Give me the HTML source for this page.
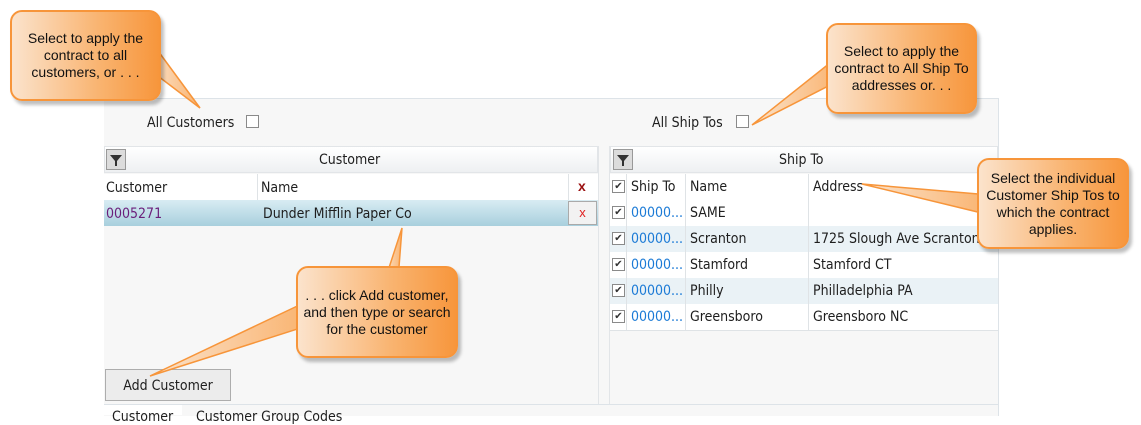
<!DOCTYPE html>
<html><head><style>
body{margin:0;width:1141px;height:415px;overflow:hidden;background:#fff;font-family:"Liberation Sans",sans-serif;position:relative}
.a{position:absolute}
.ui{font-size:14px;color:#1e1e1e;font-family:"DejaVu Sans Condensed","Liberation Sans",sans-serif}
.cb{position:absolute;width:11px;height:11px;border:1px solid #8a8a8a;background:#fff}
.chk{position:absolute;width:11px;height:11px;border:1px solid #8a8a8a;background:#fff;font-size:10px;line-height:11px;text-align:center;color:#333}
.call{position:absolute;border:2px solid #f7953a;border-radius:12px;background:linear-gradient(90deg,#fbe3cc,#f9b36f 60%,#f7963c);box-shadow:3px 4px 3px rgba(0,0,0,.25);font-size:14px;color:#111;text-align:center;display:flex;align-items:center;justify-content:center;line-height:17px;box-sizing:border-box}
.row{position:absolute;left:610px;width:388px;height:26px;border-bottom:1px solid #dfe3e6}
.c{position:absolute;top:0;height:26px;line-height:26px;border-right:1px solid #dfe3e6;box-sizing:border-box;padding-left:4px;white-space:nowrap;overflow:hidden}
</style></head><body>
<div class="a" style="left:104px;top:98px;width:894px;height:317px;background:#f7f7f7;border-top:1px solid #dde3e8;border-right:1px solid #dde3e8"></div>
<div class="a ui" style="left:147px;top:115px">All Customers</div><div class="cb" style="left:246px;top:115px"></div>
<div class="a ui" style="left:652px;top:115px">All Ship Tos</div><div class="cb" style="left:736px;top:115px"></div>
<!-- left grid -->
<div class="a" style="left:104px;top:146px;width:494px;height:27px;background:linear-gradient(#fff,#eef0f2);border:1px solid #e2e5e8;box-sizing:border-box"></div>
<div class="a" style="left:106px;top:149px;width:20px;height:21px;background:#dcdcdc;border:1px solid #999;box-sizing:border-box"><svg width="18" height="19"><path d="M3 5h12l-5 6v5h-2v-5z" fill="#333"/></svg></div>
<div class="a ui" style="left:319px;top:152px">Customer</div>
<div class="a" style="left:104px;top:174px;width:494px;height:26px;background:#fff;border-bottom:1px solid #dfe3e6"></div>
<div class="a" style="left:257px;top:174px;width:1px;height:52px;background:#dfe3e6"></div>
<div class="a" style="left:568px;top:174px;width:1px;height:26px;background:#dfe3e6"></div>
<div class="a ui" style="left:106px;top:180px">Customer</div>
<div class="a ui" style="left:261px;top:180px">Name</div>
<div class="a" style="left:578px;top:178px;color:#9a1010;font-weight:bold;font-size:14px">x</div>
<div class="a" style="left:104px;top:200px;width:494px;height:26px;background:linear-gradient(#d8ecf3,#a8cfdd)"></div>
<div class="a ui" style="left:106px;top:206px;color:#6a1e7a">0005271</div>
<div class="a ui" style="left:263px;top:206px">Dunder Mifflin Paper Co</div>
<div class="a" style="left:568px;top:201px;width:29px;height:24px;background:#f2f2f2;border:1px solid #aaa;box-sizing:border-box;color:#e02020;text-align:center;font-size:13px;line-height:22px">x</div>
<div class="a" style="left:105px;top:369px;width:126px;height:32px;background:#ececec;border:1px solid #adadad;box-sizing:border-box;text-align:center;line-height:32px" ><span class="ui">Add Customer</span></div>
<div class="a" style="left:598px;top:146px;width:1px;height:258px;background:#e2e5e8"></div>
<div class="a" style="left:609px;top:146px;width:1px;height:258px;background:#e2e5e8"></div>
<div class="a" style="left:104px;top:404px;width:894px;height:1px;background:#dde3e8"></div>
<div class="a" style="left:104px;top:405px;width:78px;height:10px;background:#fff"></div>
<div class="a ui" style="left:112px;top:409px">Customer</div>
<div class="a ui" style="left:196px;top:409px">Customer Group Codes</div>
<!-- right grid -->
<div class="a" style="left:610px;top:146px;width:388px;height:27px;background:linear-gradient(#fff,#eef0f2);border:1px solid #e2e5e8;box-sizing:border-box"></div>
<div class="a" style="left:613px;top:149px;width:20px;height:21px;background:#dcdcdc;border:1px solid #999;box-sizing:border-box"><svg width="18" height="19"><path d="M3 5h12l-5 6v5h-2v-5z" fill="#333"/></svg></div>
<div class="a ui" style="left:779px;top:152px">Ship To</div>
<div class="row ui" style="top:174px;background:#fff"><div class="c" style="left:0;width:17px"></div><div class="c" style="left:17px;width:59px">Ship To</div><div class="c" style="left:76px;width:123px">Name</div><div class="c" style="left:199px;width:189px;border:0">Address</div></div>
<div class="chk" style="left:612px;top:180px">✔</div>
<div class="row ui" style="top:200px;background:#fff"><div class="c" style="left:0;width:17px"></div><div class="c" style="left:17px;width:59px;color:#1b7ad6">00000...</div><div class="c" style="left:76px;width:123px">SAME</div><div class="c" style="left:199px;width:189px;border:0"></div></div>
<div class="row ui" style="top:226px;background:#eaf2f6"><div class="c" style="left:0;width:17px"></div><div class="c" style="left:17px;width:59px;color:#1b7ad6">00000...</div><div class="c" style="left:76px;width:123px">Scranton</div><div class="c" style="left:199px;width:189px;border:0">1725 Slough Ave Scranton</div></div>
<div class="row ui" style="top:252px;background:#fff"><div class="c" style="left:0;width:17px"></div><div class="c" style="left:17px;width:59px;color:#1b7ad6">00000...</div><div class="c" style="left:76px;width:123px">Stamford</div><div class="c" style="left:199px;width:189px;border:0">Stamford CT</div></div>
<div class="row ui" style="top:278px;background:#eaf2f6"><div class="c" style="left:0;width:17px"></div><div class="c" style="left:17px;width:59px;color:#1b7ad6">00000...</div><div class="c" style="left:76px;width:123px">Philly</div><div class="c" style="left:199px;width:189px;border:0">Philladelphia PA</div></div>
<div class="row ui" style="top:304px;background:#fff"><div class="c" style="left:0;width:17px"></div><div class="c" style="left:17px;width:59px;color:#1b7ad6">00000...</div><div class="c" style="left:76px;width:123px">Greensboro</div><div class="c" style="left:199px;width:189px;border:0">Greensboro NC</div></div>
<div class="chk" style="left:612px;top:206px">✔</div><div class="chk" style="left:612px;top:232px">✔</div><div class="chk" style="left:612px;top:258px">✔</div><div class="chk" style="left:612px;top:284px">✔</div><div class="chk" style="left:612px;top:310px">✔</div>
<!-- pointers -->
<svg class="a" style="left:0;top:0" width="1141" height="415">
<defs><linearGradient id="g" x1="0" x2="1"><stop offset="0" stop-color="#fbe3cc"/><stop offset="1" stop-color="#f9b36f"/></linearGradient></defs>
<g fill="url(#g)" stroke="#f7953a" stroke-width="1.5">
<path d="M150 40 L200 108 L150 70 Z"/>
<path d="M840 55 L752 125 L840 80 Z"/>
<path d="M990 195 L862 184 L990 215 Z"/>
<path d="M310 300 L150 376 L310 325 Z"/>
<path d="M385 280 L402 228 L398 280 Z"/>
</g></svg>
<div class="call" style="left:10px;top:10px;width:151px;height:91px">Select to apply the<br>contract to all<br>customers, or . . .</div>
<div class="call" style="left:826px;top:23px;width:151px;height:91px">Select to apply the<br>contract to All Ship To<br>addresses or. . .</div>
<div class="call" style="left:977px;top:158px;width:152px;height:91px">Select the individual<br>Customer Ship Tos to<br>which the contract<br>applies.</div>
<div class="call" style="left:296px;top:266px;width:162px;height:92px">. . . click Add customer,<br>and then type or search<br>for the customer</div>
</body></html>
